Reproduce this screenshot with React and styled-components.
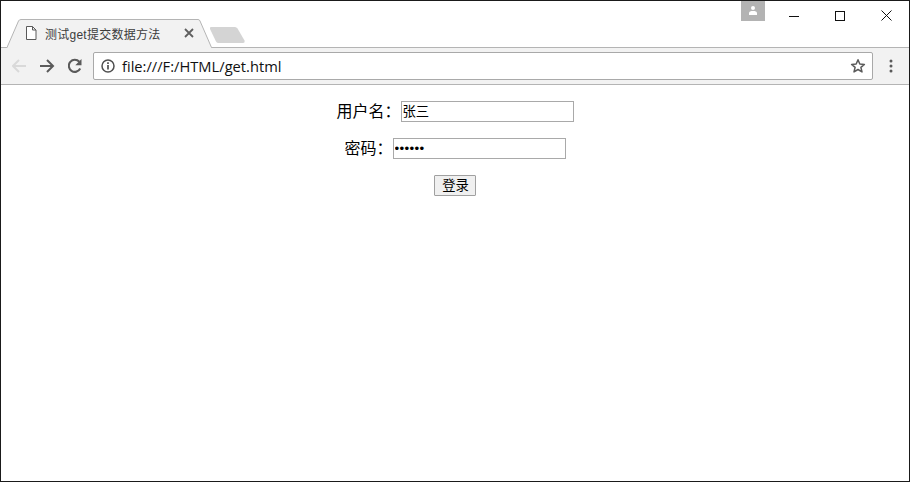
import styled, { createGlobalStyle } from "styled-components";

const GlobalStyle = createGlobalStyle`
  html, body {
    margin: 0;
    padding: 0;
    background: #fff;
  }
`;

const Window = styled.div`
  width: 910px;
  height: 482px;
  box-sizing: border-box;
  border: 1px solid #1a1a1a;
  display: flex;
  flex-direction: column;
  overflow: hidden;
  font-family: "Liberation Sans", "Noto Sans CJK SC", sans-serif;
`;

const TitleBar = styled.div`
  height: 46px;
  flex: none;
  display: flex;
  align-items: flex-start;
  justify-content: space-between;
  border-bottom: 1px solid #b4b4b4;
`;

const TabStrip = styled.div`
  display: flex;
  align-items: flex-start;
  padding: 18px 0 0 6px;
`;

const Tab = styled.div`
  display: flex;
  height: 29px;
`;

const TabEdge = styled.svg`
  display: block;
  width: 16px;
  height: 29px;
  flex: none;
`;

const TabBody = styled.div`
  width: 173px;
  height: 29px;
  box-sizing: border-box;
  border-top: 1px solid #b4b4b4;
  background: #f2f2f2;
  display: flex;
  align-items: center;
  padding: 0 0 2px 3px;
`;

const TabTitle = styled.span`
  margin-left: 8px;
  width: 139px;
  font-size: 12px;
  letter-spacing: 0.25px;
  color: #3c3c3c;
  white-space: nowrap;
`;

const NewTab = styled.svg`
  display: block;
  width: 36px;
  height: 19px;
  margin: 7px 0 0 -3px;
`;

const WindowControls = styled.div`
  display: flex;
  align-items: flex-start;
`;

const Avatar = styled.div`
  width: 24px;
  height: 20px;
  background: #b3b3b3;
  display: flex;
  justify-content: center;
  padding-top: 5px;
  box-sizing: border-box;
  margin-right: 6px;
`;

const ControlButton = styled.div`
  width: 46px;
  height: 29px;
  display: flex;
  align-items: center;
  justify-content: center;
`;

const Toolbar = styled.div`
  height: 36px;
  flex: none;
  background: #f2f2f2;
  border-bottom: 1px solid #b4b4b4;
  display: flex;
  align-items: center;
  padding: 0 16px 0 5px;
`;

const NavButton = styled.div`
  width: 28px;
  height: 28px;
  flex: none;
  display: flex;
  align-items: center;
  justify-content: center;
`;

const Omnibox = styled.div`
  flex: 1;
  height: 28px;
  box-sizing: border-box;
  margin: 0 16px 0 3px;
  background: #fff;
  border: 1px solid #a9a9a9;
  border-radius: 2px;
  display: flex;
  align-items: center;
  padding: 0 6px 0 7px;
`;

const Url = styled.span`
  flex: 1;
  margin-left: 7px;
  font-family: "Open Sans", "Liberation Sans", sans-serif;
  font-size: 14.7px;
  color: #111;
`;

const Page = styled.main`
  flex: 1;
  text-align: center;
  font-size: 16px;
  color: #000;
  padding-top: 16px;
`;

const Row = styled.p`
  margin: 0 0 16px;
  height: 21px;
  line-height: 21px;
`;

const Field = styled.input`
  width: 173px;
  height: 21px;
  box-sizing: border-box;
  padding: 0 1px 2px;
  border: 1px solid #a9a9a9;
  font-size: 13.33px;
  font-family: "Noto Sans CJK SC", sans-serif;
  color: #000;
  vertical-align: top;
  outline: none;
`;

const PasswordField = styled(Field)`
  padding: 1px;
  font-family: "Liberation Sans", sans-serif;
  letter-spacing: 0.33px;
`;

const Submit = styled.button`
  width: 42px;
  height: 21px;
  box-sizing: border-box;
  padding: 0 0 2px 1px;
  border: 1px solid #a0a0a0;
  border-radius: 1px;
  background: #f0f0f0;
  font-size: 13.33px;
  line-height: 17px;
  font-family: "Noto Sans CJK SC", sans-serif;
  color: #000;
  vertical-align: top;
`;

export default function App() {
  return (
    <Window>
      <GlobalStyle />
      <TitleBar>
        <TabStrip>
          <Tab>
            <TabEdge viewBox="0 0 16 29">
              <path d="M0 29 L11.5 2 Q12.2 0.5 14 0.5 H16 V29 Z" fill="#f2f2f2" />
              <path d="M0 28.5 L11.5 2 Q12.2 0.5 14 0.5 H16" fill="none" stroke="#b4b4b4" />
            </TabEdge>
            <TabBody>
              <svg width="11" height="14" viewBox="0 0 11 14">
                <path d="M.5 .5 H6.5 L10 4 V13.5 H.5 Z M6.5 .5 V4 H10" fill="#fff" stroke="#5a5a5a" />
              </svg>
              <TabTitle>测试get提交数据方法</TabTitle>
              <svg width="10" height="10" viewBox="0 0 10 10">
                <path d="M1 1 L9 9 M9 1 L1 9" stroke="#5f5f5f" strokeWidth="1.8" />
              </svg>
            </TabBody>
            <TabEdge viewBox="0 0 16 29">
              <path d="M0 .5 H2 Q3.5 .5 4 2 L15.5 29 H0 Z" fill="#f2f2f2" />
              <path d="M0 .5 H2 Q3.5 .5 4 2 L15.5 28.5" fill="none" stroke="#b4b4b4" />
            </TabEdge>
          </Tab>
          <NewTab viewBox="0 0 36 19">
            <path d="M2 1 H26 Q27.5 1 28.5 2.5 L35.5 14.5 Q36 17 34 17 H9.5 Q8 17 7 15.5 L1 3 Q.5 1 2 1 Z" fill="#d4d4d4" />
          </NewTab>
        </TabStrip>
        <WindowControls>
          <Avatar>
            <svg width="8" height="9" viewBox="0 0 8 9">
              <circle cx="4" cy="2" r="2" fill="#fff" />
              <path d="M0 9 V6.8 Q0 5.4 2.4 5 H5.6 Q8 5.4 8 6.8 V9 Z" fill="#fff" />
            </svg>
          </Avatar>
          <ControlButton>
            <svg width="10" height="10" viewBox="0 0 10 10">
              <path d="M0 5.5 H10" stroke="#111" />
            </svg>
          </ControlButton>
          <ControlButton>
            <svg width="10" height="10" viewBox="0 0 10 10">
              <rect x=".5" y=".5" width="9" height="9" fill="none" stroke="#111" />
            </svg>
          </ControlButton>
          <ControlButton>
            <svg width="11" height="11" viewBox="0 0 11 11">
              <path d="M.5 .5 L10.5 10.5 M10.5 .5 L.5 10.5" stroke="#111" />
            </svg>
          </ControlButton>
        </WindowControls>
      </TitleBar>
      <Toolbar>
        <NavButton>
          <svg width="16" height="16" viewBox="0 0 16 16">
            <path d="M14 8 H1 M7 2 L1 8 L7 14" fill="none" stroke="#d9d9d9" strokeWidth="2" />
          </svg>
        </NavButton>
        <NavButton>
          <svg width="16" height="16" viewBox="0 0 16 16">
            <path d="M0 8 H13 M7 2 L13 8 L7 14" fill="none" stroke="#5a5a5a" strokeWidth="2" />
          </svg>
        </NavButton>
        <NavButton>
          <svg width="16" height="16" viewBox="0 0 16 16">
            <path d="M12.2 10.5 A6 6 0 1 1 11.3 3.8" fill="none" stroke="#5a5a5a" strokeWidth="2.1" />
            <path d="M13.5 1 V7.2 H7.3 Z" fill="#5a5a5a" />
          </svg>
        </NavButton>
        <Omnibox>
          <svg width="14" height="14" viewBox="0 0 14 14">
            <circle cx="7" cy="7" r="6" fill="none" stroke="#4f4f4f" strokeWidth="1.5" />
            <path d="M7 6 V10.5 M7 3.2 V5" stroke="#4f4f4f" strokeWidth="1.7" />
          </svg>
          <Url>file:///F:/HTML/get.html</Url>
          <svg width="16" height="16" viewBox="0 0 16 16">
            <path d="M8 1.8 L9.8 6 L14.4 6.4 L10.9 9.4 L12 13.9 L8 11.5 L4 13.9 L5.1 9.4 L1.6 6.4 L6.2 6 Z" fill="none" stroke="#5a5a5a" strokeWidth="1.5" strokeLinejoin="round" />
          </svg>
        </Omnibox>
        <svg width="4" height="14" viewBox="0 0 4 14">
          <circle cx="2" cy="2" r="1.5" fill="#5a5a5a" />
          <circle cx="2" cy="7" r="1.5" fill="#5a5a5a" />
          <circle cx="2" cy="12" r="1.5" fill="#5a5a5a" />
        </svg>
      </Toolbar>
      <Page>
        <Row>
          用户名：<Field type="text" defaultValue="张三" />
        </Row>
        <Row>
          密码：<PasswordField type="password" defaultValue="123456" />
        </Row>
        <Row>
          <Submit>登录</Submit>
        </Row>
      </Page>
    </Window>
  );
}
